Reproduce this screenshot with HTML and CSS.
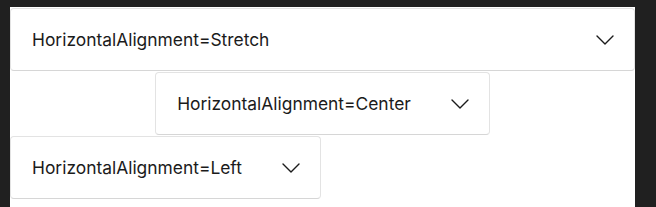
FILE: index.html
```html
<!DOCTYPE html>
<html>
<head>
<meta charset="utf-8">
<link rel="stylesheet" href="styles.css">
</head>
<body>
<div class="panel">
  <div class="combo stretch">
    <span class="label">HorizontalAlignment=Stretch</span>
    <svg class="chev" viewBox="0 0 18 10" width="18" height="10"><path d="M1 1 L9 9 L17 1" fill="none" stroke="#1b1b1b" stroke-width="1.4" stroke-linecap="round" stroke-linejoin="round"/></svg>
  </div>
  <div class="combo center">
    <span class="label">HorizontalAlignment=Center</span>
    <svg class="chev" viewBox="0 0 18 10" width="18" height="10"><path d="M1 1 L9 9 L17 1" fill="none" stroke="#1b1b1b" stroke-width="1.4" stroke-linecap="round" stroke-linejoin="round"/></svg>
  </div>
  <div class="combo left">
    <span class="label">HorizontalAlignment=Left</span>
    <svg class="chev" viewBox="0 0 18 10" width="18" height="10"><path d="M1 1 L9 9 L17 1" fill="none" stroke="#1b1b1b" stroke-width="1.4" stroke-linecap="round" stroke-linejoin="round"/></svg>
  </div>
</div>
</body>
</html>
```
FILE: styles.css
```css
html, body {
  margin: 0;
  padding: 0;
  background: #202020;
  height: 100%;
  overflow: hidden;
}
.panel {
  margin: 7px 0 0 10px;
  width: 625px;
  height: 200px;
  background: #ffffff;
  padding-top: 1px;
  box-sizing: border-box;
  display: flex;
  flex-direction: column;
  gap: 1px;
}
.combo {
  box-sizing: border-box;
  height: 63px;
  border: 1px solid #e3e3e3;
  border-bottom-color: #d6d6d6;
  border-radius: 4px;
  background: #ffffff;
  display: flex;
  align-items: center;
  justify-content: space-between;
  gap: 40px;
  padding: 0 20px 0 21px;
  font-family: Inter, "Noto Sans", sans-serif;
  font-size: 17.4px;
  color: #1b1b1b;
}
.stretch { align-self: stretch; }
.center { align-self: center; }
.left { align-self: flex-start; }
.label { white-space: nowrap; }
.chev { display: block; flex: none; }
```
